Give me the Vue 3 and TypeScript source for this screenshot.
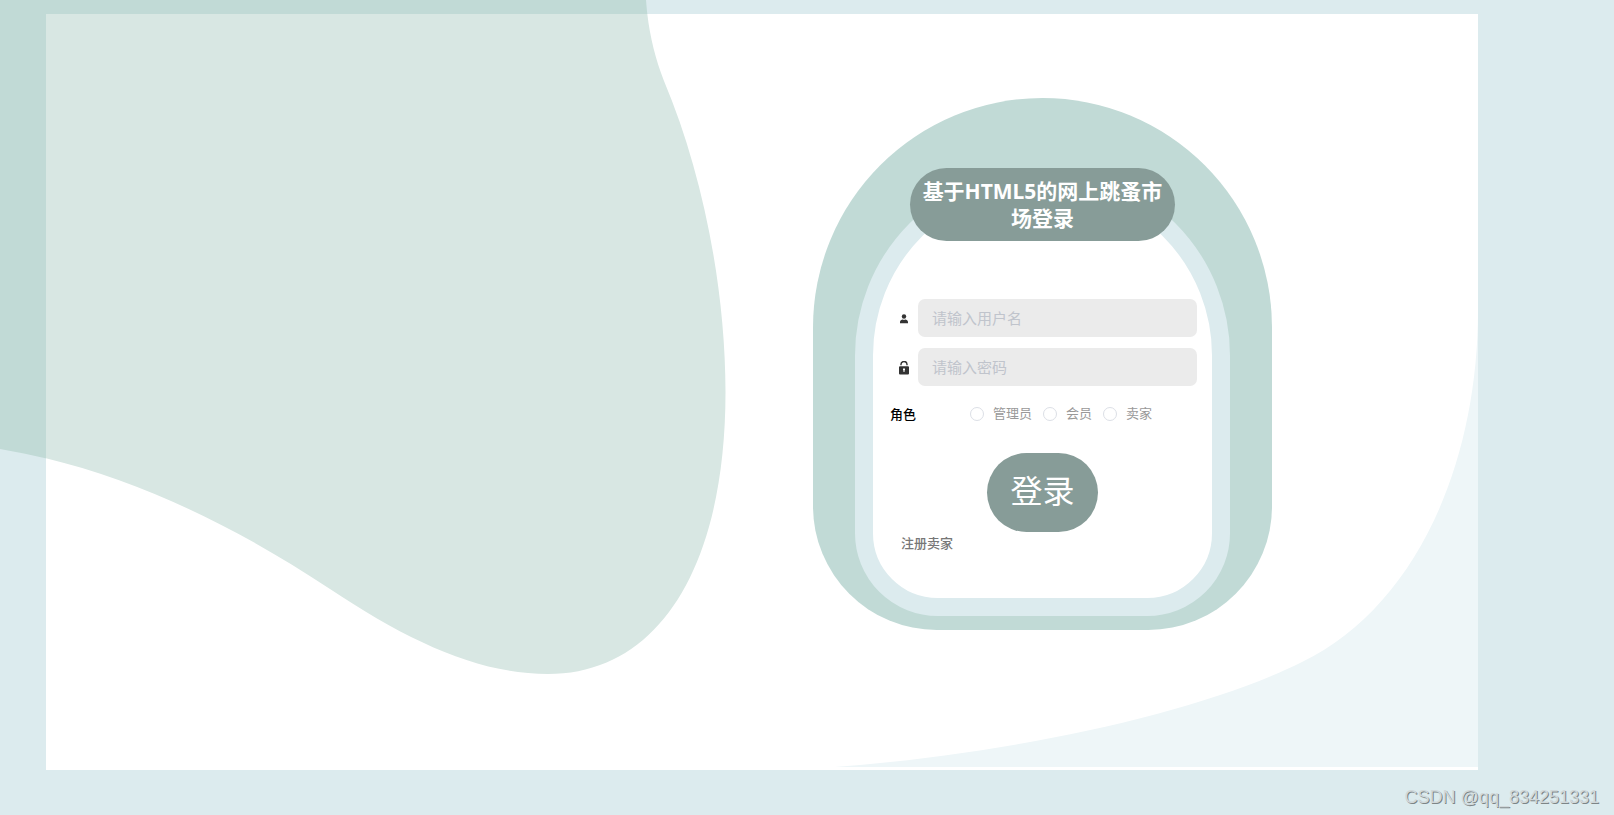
<script setup lang="ts">
import { ref } from 'vue'

interface Role {
  value: string
  label: string
}

const roles: Role[] = [
  { value: 'admin', label: '管理员' },
  { value: 'member', label: '会员' },
  { value: 'seller', label: '卖家' },
]

const username = ref('')
const password = ref('')
const role = ref('')
</script>

<template>
  <div class="page">
    <svg class="backdrop" viewBox="0 0 1614 815" preserveAspectRatio="none" aria-hidden="true">
      <defs>
        <clipPath id="panel-area"><rect x="46" y="14" width="1432" height="756" /></clipPath>
        <path
          id="blob"
          d="M0 0H646C648 29 654 55 664 81C702 171 725.500 287 725.500 392C725.500 565 660 674 548 674C478 674 408 641 330 589C220 516 110 467 0 449Z"
        />
      </defs>
      <use href="#blob" fill="#c1dad6" />
      <rect x="46" y="14" width="1432" height="756" fill="#fff" />
      <use href="#blob" fill="#d8e7e3" clip-path="url(#panel-area)" />
      <path d="M835 767C1010 754 1200 713 1302 662C1412 609 1478 470 1478 310V767Z" fill="#eef6f8" />
    </svg>

    <main class="layout">
      <section class="card">
        <form class="form" @submit.prevent>
          <h1 class="title">基于HTML5的网上跳蚤市场登录</h1>

          <div class="field">
            <label class="icon" for="username" aria-label="用户名">
              <svg width="10" height="10" viewBox="0 0 10 10" fill="#333">
                <circle cx="5" cy="2.500" r="2.200" />
                <path d="M1 9.300V8C1 6.500 2.400 5.800 3.800 5.500Q5 6.300 6.200 5.500C7.600 5.800 9 6.500 9 8V9.300Z" />
              </svg>
            </label>
            <input id="username" v-model="username" class="box" type="text" placeholder="请输入用户名" />
          </div>

          <div class="field">
            <label class="icon" for="password" aria-label="密码">
              <svg width="10" height="14" viewBox="0 0 10 14">
                <path d="M2 4.200V3.800A3 3 0 0 1 8 3.200V4.200" fill="none" stroke="#333" stroke-width="1.400" />
                <path
                  fill="#333"
                  fill-rule="evenodd"
                  d="M1 5.300H9A1 1 0 0 1 10 6.300V12.500A1 1 0 0 1 9 13.500H1A1 1 0 0 1 0 12.500V6.300A1 1 0 0 1 1 5.300ZM4 7.500V9.300H4.500V11H5.500V9.300H6V7.500Z"
                />
              </svg>
            </label>
            <input id="password" v-model="password" class="box" type="password" placeholder="请输入密码" />
          </div>

          <div class="roles" role="radiogroup" aria-labelledby="role-label">
            <span id="role-label" class="role-label">角色</span>
            <label v-for="item in roles" :key="item.value" class="role">
              <input v-model="role" class="radio" type="radio" name="role" :value="item.value" />
              <span class="role-name">{{ item.label }}</span>
            </label>
          </div>

          <button class="submit" type="submit">登录</button>
          <a class="register" href="#register">注册卖家</a>
        </form>
      </section>
    </main>

    <footer class="credit">CSDN @qq_834251331</footer>
  </div>
</template>

<style>
body {
  margin: 0;
}
</style>

<style scoped>
.page {
  position: relative;
  display: flex;
  flex-direction: column;
  box-sizing: border-box;
  min-height: 100vh;
  overflow: hidden;
  background: #dcebee;
  font-family: 'Noto Sans', 'Noto Sans CJK SC', sans-serif;
}

.backdrop {
  position: absolute;
  inset: 0;
  width: 100%;
  height: 100%;
}

.layout {
  position: relative;
  flex: 1;
  display: grid;
  grid-template-columns: 813fr auto 342fr;
  align-items: start;
  padding-top: 98px;
}

.card {
  grid-column: 2;
  box-sizing: border-box;
  width: 459px;
  padding: 70px 42px 14px;
  border-radius: 230px 230px 124px 124px;
  background: #c1dad6;
}

.form {
  display: flex;
  flex-direction: column;
  align-items: center;
  padding: 0 15px 44px;
  border: 18px solid #dcebee;
  border-radius: 188px 188px 83px 83px;
  background: #fff;
}

.title {
  box-sizing: border-box;
  width: 265px;
  margin: -18px 0 58px;
  padding: 10px 8px 9px;
  border-radius: 37px;
  background: #879c98;
  color: #fff;
  font-size: 21px;
  font-weight: 700;
  line-height: 27px;
  text-align: center;
}

.field {
  display: flex;
  align-items: center;
  align-self: stretch;
  margin-bottom: 11px;
}

.icon {
  display: flex;
  box-sizing: border-box;
  flex: 0 0 30px;
  justify-content: center;
  padding: 2px 0 0 2px;
}

.box {
  flex: 1;
  box-sizing: border-box;
  min-width: 0;
  height: 38px;
  padding: 0 14px;
  border: 0;
  border-radius: 7px;
  outline: 0;
  background: #ebebeb;
  color: #333;
  font-family: inherit;
  font-size: 15px;
}

.box::placeholder {
  color: #c0c4cc;
  opacity: 1;
}

.roles {
  display: flex;
  align-items: center;
  align-self: stretch;
  gap: 11px;
  height: 34px;
  margin-bottom: 22px;
  font-size: 13px;
  line-height: 20px;
}

.role-label {
  flex: 0 0 69px;
  padding-left: 2px;
  color: #000;
  font-weight: 500;
}

.role {
  display: flex;
  align-items: center;
  gap: 9px;
  color: #999;
}

.role-name {
  padding-bottom: 2px;
}

.radio {
  box-sizing: border-box;
  width: 14px;
  height: 14px;
  margin: 0;
  border: 1px solid #dcdfe6;
  border-radius: 50%;
  appearance: none;
  background: #fff;
}

.radio:checked {
  border: 4px solid #879c98;
}

.submit {
  width: 111px;
  height: 79px;
  padding: 0 0 7px;
  border: 0;
  border-radius: 40px;
  background: #879c98;
  color: #fff;
  font-family: inherit;
  font-size: 32px;
}

.register {
  align-self: flex-start;
  margin-left: 13px;
  color: #777;
  font-size: 13px;
  font-weight: 500;
  line-height: 22px;
  text-decoration: none;
}

.credit {
  position: relative;
  padding: 0 15px 7px;
  color: #d0d8da;
  font-family: 'Liberation Sans', Arial, sans-serif;
  font-size: 18px;
  line-height: 22px;
  text-align: right;
  text-shadow: 1px 1px 0 #7d8587;
}
</style>
